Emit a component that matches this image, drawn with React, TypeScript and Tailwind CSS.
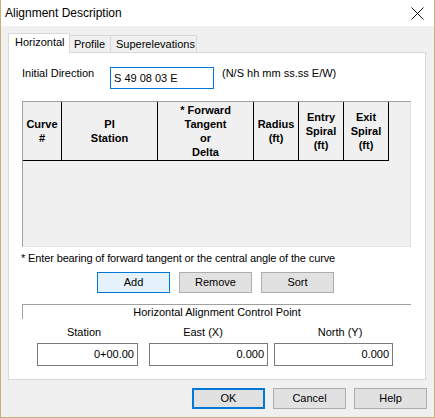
import React from "react";

const font = { fontFamily: '"Liberation Sans", Arial, sans-serif' };

const columns = [
  { w: "w-[39px]", lines: ["Curve", "#"] },
  { w: "w-[96px]", lines: ["PI", "Station"] },
  { w: "w-[96px]", lines: ["* Forward", "Tangent", "or", "Delta"] },
  { w: "w-[45px]", lines: ["Radius", "(ft)"] },
  { w: "w-[45px]", lines: ["Entry", "Spiral", "(ft)"] },
  { w: "w-[45px]", lines: ["Exit", "Spiral", "(ft)"] },
];

function Button({ label, variant = "normal", className = "" }: { label: string; variant?: "normal" | "focus" | "default"; className?: string }) {
  const styles =
    variant === "focus"
      ? "border border-[#0078d7] bg-[#e5f1fb]"
      : variant === "default"
      ? "border-2 border-[#0078d7] bg-[#e1e1e1]"
      : "border border-[#adadad] bg-[#e1e1e1]";
  return (
    <button className={`w-[73px] h-[21px] flex items-center justify-center text-[11px] leading-none text-black ${styles} ${className}`}>
      {label}
    </button>
  );
}

export default function App() {
  return (
    <div style={font} className="w-[435px] h-[418px] bg-[#f0f0f0] border-l border-r border-b border-[#c8b07a] flex flex-col text-black overflow-hidden">
      {/* title bar */}
      <div className="h-[26px] bg-white flex items-center justify-between pl-[4px] pr-[10px] shrink-0">
        <span className="text-[12px]">Alignment Description</span>
        <svg width="13" height="13" viewBox="0 0 13 13">
          <path d="M0.5 0.5 L12.5 12.5 M12.5 0.5 L0.5 12.5" stroke="#111" strokeWidth="1" fill="none" />
        </svg>
      </div>

      <div className="pl-[7px] pt-[7px]">
        {/* tabs */}
        <div className="flex items-end h-[19px] text-[11px]">
          <div className="relative z-10 w-[62px] h-[20px] -mb-px bg-white border border-b-0 border-[#d9d9d9] flex items-center pl-[6px] pb-[2px]">
            Horizontal
          </div>
          <div className="w-[42px] h-[17px] -ml-px bg-[#f0f0f0] border border-b-0 border-[#d9d9d9] flex items-center pl-[4px]">
            Profile
          </div>
          <div className="w-[87px] h-[17px] -ml-px bg-[#f0f0f0] border border-b-0 border-[#d9d9d9] flex items-center pl-[5px]">
            Superelevations
          </div>
        </div>

        {/* tab page */}
        <div className="w-[418px] h-[328px] bg-white border border-[#d9d9d9] text-[11px] leading-[13px]">
          <div className="flex items-start mt-[14px] ml-[13px]">
            <span className="w-[88px]">Initial Direction</span>
            <div className="w-[104px] h-[22px] border border-[#0078d7] flex items-center pl-[3px] pt-[1px]">S 49 08 03 E</div>
            <span className="ml-[8px]">(N/S hh mm ss.ss E/W)</span>
          </div>

          {/* grid */}
          <div className="mt-[12px] ml-[13px] w-[389px] h-[146px] bg-[#f0f0f0] border-t border-l border-[#a0a0a0] border-r-[#e3e3e3] border-b-[#e3e3e3] border-r border-b">
            <div className="flex">
              {columns.map((c, i) => (
                <div key={i} className={`${c.w} h-[59px] border-r border-b border-black flex flex-col items-center justify-center font-bold leading-[14px]`}>
                  {c.lines.map((l, j) => (
                    <span key={j}>{l}</span>
                  ))}
                </div>
              ))}
            </div>
          </div>

          <div className="mt-[5px] ml-[12px] tracking-[-0.13px]">* Enter bearing of forward tangent or the central angle of the curve</div>

          <div className="flex gap-[9px] mt-[7px] ml-[88px]">
            <Button label="Add" variant="focus" />
            <Button label="Remove" />
            <Button label="Sort" />
          </div>

          {/* control point group */}
          <div className="mt-[11px] ml-[13px] w-[389px] h-[15px] border-t border-l border-[#a0a0a0] flex justify-center pt-[1px]">
            Horizontal Alignment Control Point
          </div>

          <div className="flex mt-[7px]">
            <span className="ml-[28px] w-[94px] text-center">Station</span>
            <span className="ml-[18px] w-[108px] text-center">East (X)</span>
            <span className="ml-[17px] w-[132px] text-center">North (Y)</span>
          </div>

          <div className="flex mt-[4px] ml-[28px]">
            <div className="w-[101px] h-[23px] border border-[#7a7a7a] flex items-center justify-end pr-[3px]">0+00.00</div>
            <div className="ml-[11px] w-[119px] h-[23px] border border-[#7a7a7a] flex items-center justify-end pr-[3px]">0.000</div>
            <div className="ml-[6px] w-[119px] h-[23px] border border-[#7a7a7a] flex items-center justify-end pr-[3px]">0.000</div>
          </div>
        </div>

        {/* dialog buttons */}
        <div className="flex justify-end gap-[8px] mt-[8px] mr-[7px]">
          <Button label="OK" variant="default" />
          <Button label="Cancel" />
          <Button label="Help" />
        </div>
      </div>
    </div>
  );
}
